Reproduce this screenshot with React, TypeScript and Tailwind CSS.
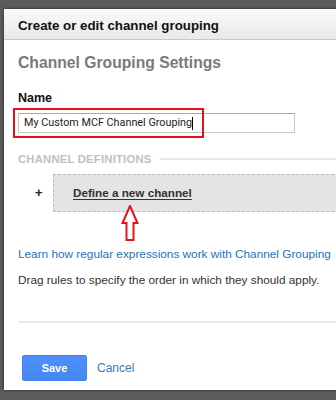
export default function App() {
  return (
    <div className="w-[336px] h-[400px] overflow-hidden bg-[#5c5c5c] pl-[4px] pt-[9px] font-['Liberation_Sans',Arial,sans-serif]">
      <div className="w-[360px] h-[381px] bg-white flex flex-col shadow-[0_0_3px_rgba(0,0,0,0.6)]">
        <div className="h-[31px] shrink-0 bg-gradient-to-b from-[#fafafa] to-[#e9e9e9] border-b border-[#c8c8c8] flex items-center pl-[14px] pt-[3px]">
          <span className="text-[13.3px] font-bold text-[#111]">Create or edit channel grouping</span>
        </div>
        <div className="pl-[14px] pt-[13px] flex flex-col">
          <h2 className="text-[15.7px] font-bold text-[#7a7a7a] leading-[20px]">Channel Grouping Settings</h2>
          <label className="mt-[18px] text-[12.5px] font-bold text-[#111] leading-[15px]">Name</label>
          <div className="relative mt-[7px] h-[20px] w-[277px]">
            <div className="h-full w-full border border-[#c8c8c8] border-t-[#a8a8a8] flex items-center pl-[5px] text-[10.8px] text-[#222] font-['Roboto',sans-serif]">
              My Custom MCF Channel Grouping<span className="inline-block w-px h-[13px] bg-[#000]"></span>
            </div>
            <div className="absolute left-[-5px] top-[-5px] w-[191px] h-[30px] border-2 border-[#e8101a]"></div>
          </div>
          <div className="mt-[18px] flex items-center">
            <span className="text-[11.3px] font-bold text-[#c0c0c0] tracking-[0.2px]">CHANNEL DEFINITIONS</span>
            <div className="flex-1 ml-[8px] h-[2px] bg-[#e8e8e8]"></div>
          </div>
          <div className="relative mt-[6px] flex items-center h-[38px]">
            <span className="w-[35px] shrink-0 pl-[17px] text-[13px] font-bold text-[#222]">+</span>
            <div className="flex-1 h-full bg-[#e4e4e4] border border-dashed border-[#bdbdbd] border-r-0 flex items-center pl-[19px]">
              <span className="text-[11.7px] font-bold text-[#333] underline underline-offset-2">Define a new channel</span>
            </div>
            <svg className="absolute left-[103px] top-[31px]" width="18" height="36" viewBox="0 0 18 36">
              <path d="M9 1 L16.5 18 L12.5 18 L12.5 35 L5.5 35 L5.5 18 L1.5 18 Z" fill="white" stroke="#e8101a" strokeWidth="2" strokeLinejoin="miter" />
            </svg>
          </div>
          <a className="mt-[35px] text-[11.8px] text-[#2b70b7] leading-[15px]">Learn how regular expressions work with Channel Grouping</a>
          <p className="mt-[11px] text-[11.8px] text-[#333] leading-[15px]">Drag rules to specify the order in which they should apply.</p>
          <div className="mt-[33px] h-[2px] bg-[#ebebeb]"></div>
          <div className="mt-[32px] flex items-center">
            <button className="ml-[4px] w-[65px] h-[26px] rounded-[2px] bg-gradient-to-b from-[#4d90fe] to-[#4787ed] border border-[#3d82f0] text-white text-[11px] font-bold">Save</button>
            <span className="ml-[10px] text-[12px] text-[#3a78b8]">Cancel</span>
          </div>
        </div>
      </div>
    </div>
  )
}
